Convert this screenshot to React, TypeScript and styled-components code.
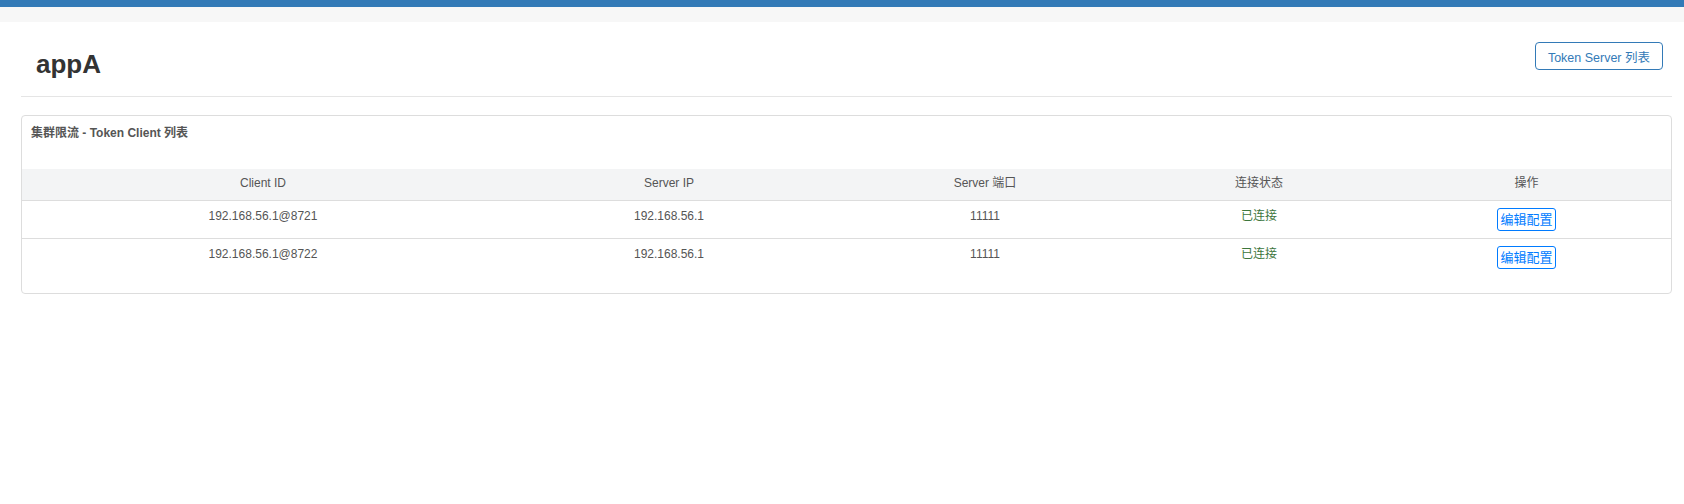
import React from "react";
import styled, { createGlobalStyle } from "styled-components";

const GlobalStyle = createGlobalStyle`
  html, body { margin: 0; padding: 0; background: #fff; }
  body {
    font-family: "Liberation Sans", "Noto Sans CJK SC", sans-serif;
    font-size: 12px;
    color: #555;
  }
`;

const TopBar = styled.div`
  height: 7px;
  background: #337ab7;
`;

const SubBar = styled.div`
  height: 15px;
  background: #f7f7f7;
`;

const Main = styled.main`
  padding: 0 12px 0 21px;
`;

const Header = styled.header`
  display: flex;
  justify-content: space-between;
  align-items: flex-start;
  padding: 20px 9px 14px 15px;
  border-bottom: 1px solid #e5e5e5;
`;

const Title = styled.h1`
  margin: 7px 0 3px;
  font-size: 26px;
  line-height: 30px;
  font-weight: 700;
  color: #333;
`;

const OutlineButton = styled.button`
  height: 28px;
  padding: 0 12px;
  font-family: inherit;
  font-size: 12.5px;
  color: #337ab7;
  background: #fff;
  border: 1px solid #337ab7;
  border-radius: 4px;
  cursor: pointer;
`;

const Card = styled.section`
  margin-top: 18px;
  border: 1px solid #ddd;
  border-radius: 4px;
  padding-bottom: 17px;
`;

const CardTitle = styled.div`
  padding: 9px 9px 0;
  font-size: 12px;
  line-height: 16px;
  font-weight: 700;
  color: #555;
`;

const Table = styled.table`
  width: 100%;
  margin-top: 28px;
  border-collapse: collapse;
  table-layout: fixed;
`;

const Th = styled.th`
  padding: 7px 8px 9px;
  line-height: 15px;
  font-size: 12px;
  font-weight: 400;
  color: #555;
  text-align: center;
  background: #f3f4f5;
  border-bottom: 1px solid #ddd;
`;

const Tr = styled.tr`
  & + & > td {
    border-top: 1px solid #ddd;
  }
`;

const Td = styled.td<{ $status?: boolean }>`
  padding: 7px 8px;
  line-height: 16px;
  font-size: 12px;
  text-align: center;
  vertical-align: top;
  color: ${(p) => (p.$status ? "#3c763d" : "#555")};
`;

const EditButton = styled.button`
  display: inline-block;
  height: 23px;
  padding: 0 2px;
  font-family: inherit;
  font-size: 13px;
  line-height: 21px;
  color: #007bff;
  background: #fff;
  border: 1px solid #007bff;
  border-radius: 3px;
  cursor: pointer;
  vertical-align: top;
`;

const rows = [
  { id: "192.168.56.1@8721", ip: "192.168.56.1", port: "11111", status: "已连接" },
  { id: "192.168.56.1@8722", ip: "192.168.56.1", port: "11111", status: "已连接" },
];

export default function App() {
  return (
    <>
      <GlobalStyle />
      <TopBar />
      <SubBar />
      <Main>
        <Header>
          <Title>appA</Title>
          <OutlineButton>Token Server 列表</OutlineButton>
        </Header>
        <Card>
          <CardTitle>集群限流 - Token Client 列表</CardTitle>
          <Table>
            <colgroup>
              <col style={{ width: 482 }} />
              <col style={{ width: 330 }} />
              <col style={{ width: 302 }} />
              <col style={{ width: 246 }} />
              <col />
            </colgroup>
            <thead>
              <tr>
                <Th>Client ID</Th>
                <Th>Server IP</Th>
                <Th>Server 端口</Th>
                <Th>连接状态</Th>
                <Th>操作</Th>
              </tr>
            </thead>
            <tbody>
              {rows.map((r) => (
                <Tr key={r.id}>
                  <Td>{r.id}</Td>
                  <Td>{r.ip}</Td>
                  <Td>{r.port}</Td>
                  <Td $status>{r.status}</Td>
                  <Td>
                    <EditButton>编辑配置</EditButton>
                  </Td>
                </Tr>
              ))}
            </tbody>
          </Table>
        </Card>
      </Main>
    </>
  );
}
